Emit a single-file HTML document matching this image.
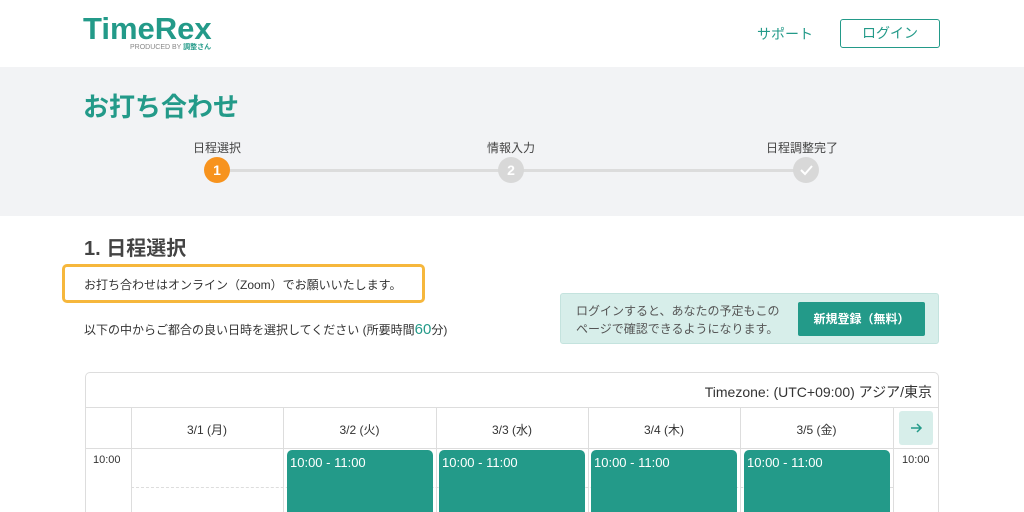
<!DOCTYPE html><html><head><meta charset="utf-8"><style>
html,body{margin:0;width:1024px;height:512px;overflow:hidden}
body{background:#fff;font-family:"Liberation Sans","Noto Sans CJK JP",sans-serif;position:relative;color:#333}
.a{position:absolute}
.t{color:#239a89}
</style></head><body>
<div class="a t" style="left:83px;top:11px;font-size:31px;font-weight:bold;letter-spacing:0px">TimeRex</div>
<div class="a" style="left:130px;top:42px;font-size:7px;color:#888">PRODUCED BY <span class="t" style="font-weight:bold">調整さん</span></div>
<div class="a t" style="left:757px;top:24px;font-size:14px">サポート</div>
<div class="a t" style="left:840px;top:19px;width:98px;height:27px;border:1px solid #239a89;border-radius:3px;text-align:center;line-height:27px;font-size:14px">ログイン</div>
<div class="a" style="left:0;top:67px;width:1024px;height:149px;background:#f2f3f5"></div>
<div class="a t" style="left:83px;top:87px;font-size:26px;font-weight:bold">お打ち合わせ</div>
<div class="a" style="left:217px;top:169px;width:590px;height:3px;background:#dcdcdc"></div>
<div class="a" style="left:193px;top:139px;font-size:12px;color:#444">日程選択</div>
<div class="a" style="left:487px;top:139px;font-size:12px;color:#444">情報入力</div>
<div class="a" style="left:766px;top:139px;font-size:12px;color:#444">日程調整完了</div>
<div class="a" style="left:204px;top:157px;width:26px;height:26px;border-radius:50%;background:#f7931e;color:#fff;font-weight:bold;font-size:14px;text-align:center;line-height:26px">1</div>
<div class="a" style="left:498px;top:157px;width:26px;height:26px;border-radius:50%;background:#d8d8d8;color:#fff;font-weight:bold;font-size:14px;text-align:center;line-height:26px">2</div>
<div class="a" style="left:793px;top:157px;width:26px;height:26px;border-radius:50%;background:#d8d8d8"><svg width="26" height="26"><path d="M8 13l4 4 7-8" stroke="#fff" stroke-width="2" fill="none"/></svg></div>
<div class="a" style="left:84px;top:232px;font-size:20px;font-weight:bold;color:#444">1. 日程選択</div>
<div class="a" style="left:62px;top:264px;width:363px;height:39px;border:3px solid #f6b73c;border-radius:5px;box-sizing:border-box"></div>
<div class="a" style="left:84px;top:276px;font-size:12px">お打ち合わせはオンライン（Zoom）でお願いいたします。</div>
<div class="a" style="left:84px;top:321px;font-size:12px">以下の中からご都合の良い日時を選択してください (所要時間<span class="t" style="font-size:15px">60</span>分)</div>
<div class="a" style="left:560px;top:293px;width:379px;height:51px;background:#d7eeea;border:1px solid #c4e3de;border-radius:3px;box-sizing:border-box"></div>
<div class="a" style="left:576px;top:302px;font-size:12px;line-height:18px;color:#555">ログインすると、あなたの予定もこの<br>ページで確認できるようになります。</div>
<div class="a" style="left:798px;top:302px;width:127px;height:34px;background:#239a89;border-radius:2px;color:#fff;font-size:12px;font-weight:bold;text-align:center;line-height:34px">新規登録（無料）</div>
<div class="a" style="left:85px;top:372px;width:854px;height:140px;border:1px solid #ddd;border-bottom:none;border-radius:5px 5px 0 0;box-sizing:border-box"></div>
<div class="a" style="right:92px;top:382px;font-size:14px">Timezone: (UTC+09:00) アジア/東京</div>
<div class="a" style="left:85px;top:407px;width:854px;height:1px;background:#ddd"></div>
<div class="a" style="left:85px;top:448px;width:854px;height:1px;background:#ddd"></div>
<div class="a" style="left:131px;top:487px;width:762px;border-top:1px dashed #ddd"></div>
<div class="a" style="left:131px;top:407px;width:1px;height:105px;background:#ddd"></div>
<div class="a" style="left:283px;top:407px;width:1px;height:105px;background:#ddd"></div>
<div class="a" style="left:436px;top:407px;width:1px;height:105px;background:#ddd"></div>
<div class="a" style="left:588px;top:407px;width:1px;height:105px;background:#ddd"></div>
<div class="a" style="left:740px;top:407px;width:1px;height:105px;background:#ddd"></div>
<div class="a" style="left:893px;top:407px;width:1px;height:105px;background:#ddd"></div>
<div class="a" style="left:131px;top:421px;width:152px;text-align:center;font-size:12px">3/1 (月)</div>
<div class="a" style="left:283px;top:421px;width:153px;text-align:center;font-size:12px">3/2 (火)</div>
<div class="a" style="left:436px;top:421px;width:152px;text-align:center;font-size:12px">3/3 (水)</div>
<div class="a" style="left:588px;top:421px;width:152px;text-align:center;font-size:12px">3/4 (木)</div>
<div class="a" style="left:740px;top:421px;width:153px;text-align:center;font-size:12px">3/5 (金)</div>
<div class="a" style="left:899px;top:411px;width:34px;height:34px;background:#d7eeea;border-radius:3px"><svg width="34" height="34"><path d="M12 17h10M18 13l4 4-4 4" stroke="#239a89" stroke-width="1.5" fill="none"/></svg></div>
<div class="a" style="left:93px;top:454px;font-size:11px">10:00</div>
<div class="a" style="left:902px;top:454px;font-size:11px">10:00</div>
<div class="a" style="left:287px;top:450px;width:146px;height:62px;background:#239a89;border-radius:5px 5px 0 0;color:#fff;font-size:13px;padding:5px 3px;box-sizing:border-box">10:00 - 11:00</div>
<div class="a" style="left:439px;top:450px;width:146px;height:62px;background:#239a89;border-radius:5px 5px 0 0;color:#fff;font-size:13px;padding:5px 3px;box-sizing:border-box">10:00 - 11:00</div>
<div class="a" style="left:591px;top:450px;width:146px;height:62px;background:#239a89;border-radius:5px 5px 0 0;color:#fff;font-size:13px;padding:5px 3px;box-sizing:border-box">10:00 - 11:00</div>
<div class="a" style="left:744px;top:450px;width:146px;height:62px;background:#239a89;border-radius:5px 5px 0 0;color:#fff;font-size:13px;padding:5px 3px;box-sizing:border-box">10:00 - 11:00</div>
</body></html>
